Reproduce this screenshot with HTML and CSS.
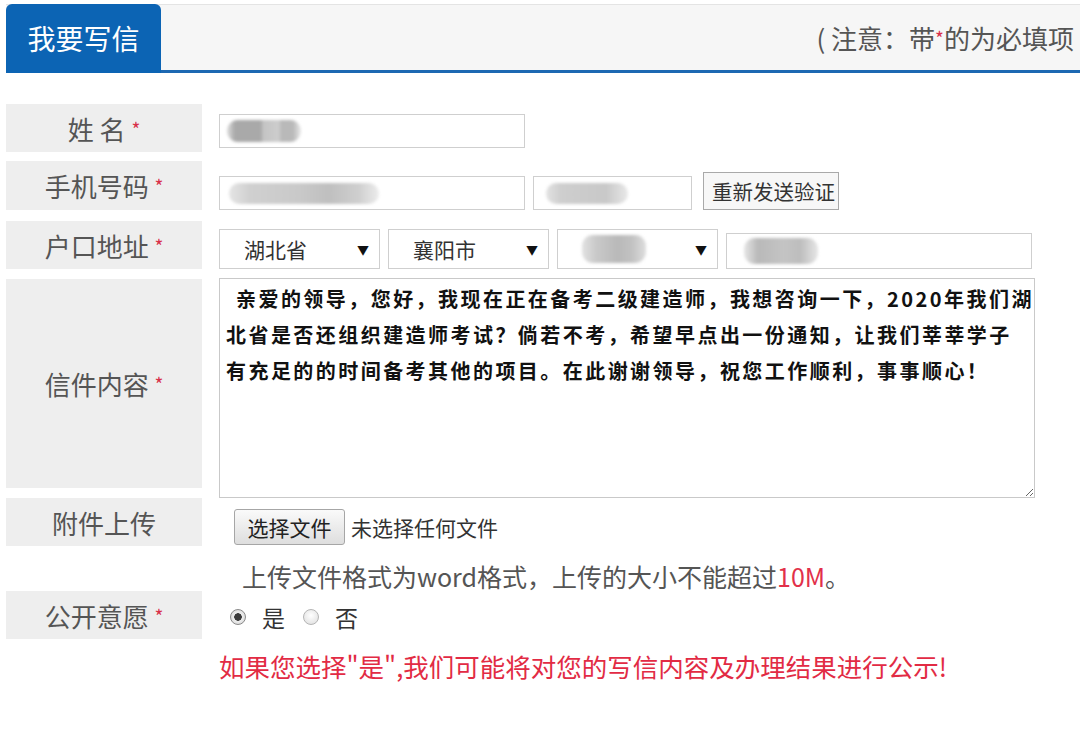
FILE: index.html
```html
<!DOCTYPE html>
<html lang="zh-CN">
<head>
    <meta charset="UTF-8">
    <meta name="viewport" content="width=device-width, initial-scale=1.0">
    <title>我要写信</title>
    <link rel="stylesheet" href="styles.css">
</head>
<body>
    <div class="tabbar">
        <div class="tab">我要写信</div>
        <div class="note">(&nbsp;注意：带<span class="req">*</span>的为必填项</div>
    </div>

    <div class="form">
        <div class="row row-name">
            <div class="label">姓 名 <span class="req">*</span></div>
            <div class="field">
                <div class="input w-name"><span class="blur blur-name"></span></div>
            </div>
        </div>

        <div class="row row-phone">
            <div class="label">手机号码 <span class="req">*</span></div>
            <div class="field">
                <div class="input w-name"><span class="blur blur-phone"></span></div>
                <div class="input w-code"><span class="blur blur-code"></span></div>
                <div class="btn-resend">重新发送验证</div>
            </div>
        </div>

        <div class="row row-addr">
            <div class="label">户口地址 <span class="req">*</span></div>
            <div class="field">
                <div class="select"><span>湖北省</span><span class="arrow">▼</span></div>
                <div class="select"><span>襄阳市</span><span class="arrow">▼</span></div>
                <div class="select"><span class="blur blur-county"></span><span class="arrow">▼</span></div>
                <div class="input w-street"><span class="blur blur-street"></span></div>
            </div>
        </div>

        <div class="row row-content">
            <div class="label label-tall">信件内容 <span class="req">*</span></div>
            <div class="field">
                <textarea class="letter" wrap="off">亲爱的领导，您好，我现在正在备考二级建造师，我想咨询一下，2020年我们湖
北省是否还组织建造师考试？倘若不考，希望早点出一份通知，让我们莘莘学子
有充足的的时间备考其他的项目。在此谢谢领导，祝您工作顺利，事事顺心！</textarea>
            </div>
        </div>

        <div class="row row-file">
            <div class="label">附件上传</div>
            <div class="field">
                <div class="btn-file">选择文件</div>
                <span class="file-none">未选择任何文件</span>
            </div>
        </div>

        <p class="hint">上传文件格式为word格式，上传的大小不能超过<span class="red">10M</span>。</p>

        <div class="row row-public">
            <div class="label">公开意愿 <span class="req">*</span></div>
            <div class="field">
                <span class="radio checked"></span><span class="radio-text">是</span>
                <span class="radio"></span><span class="radio-text">否</span>
            </div>
        </div>

        <p class="warn">如果您选择"是",我们可能将对您的写信内容及办理结果进行公示!</p>
    </div>
</body>
</html>
```

FILE: styles.css
```css
body {
    margin: 0;
    padding: 0;
    background-color: #fff;
    font-family: "Noto Sans CJK SC", "Noto Sans", sans-serif;
    color: #555;
    overflow: hidden;
}

.tabbar {
    display: flex;
    align-items: stretch;
    height: 65px;
    margin: 4px 0 0 6px;
    background-color: #f6f6f6;
    border-top: 1px solid #e4e4e4;
    border-bottom: 3px solid #1d68b2;
}

.tab {
    width: 155px;
    margin-top: -1px;
    margin-bottom: -3px;
    background-color: #0c64b4;
    border-radius: 6px 6px 0 0;
    color: #fff;
    font-size: 28px;
    display: flex;
    align-items: center;
    justify-content: center;
    padding-bottom: 2px;
    box-sizing: border-box;
}

.note {
    flex: 1;
    display: flex;
    align-items: center;
    justify-content: flex-end;
    font-size: 26px;
    color: #555;
    white-space: pre;
    overflow: hidden;
    padding-right: 6px;
}

.req {
    color: #d8304a;
    font-size: 19px;
    vertical-align: 6px;
}

.note .req {
    vertical-align: 5px;
}

.form {
    padding-left: 6px;
}

.row {
    display: flex;
    align-items: stretch;
}

.label {
    width: 196px;
    height: 48px;
    flex: none;
    background-color: #eeeeee;
    font-size: 26px;
    color: #555;
    display: flex;
    align-items: center;
    justify-content: center;
    white-space: pre;
}

.label-tall {
    height: 209px;
}

.field {
    margin-left: 17px;
    display: flex;
    align-items: flex-end;
    gap: 8px;
}

.row-name { margin-top: 31px; }
.row-name .field { align-items: center; padding-top: 6px; }

.row-phone { margin-top: 9px; }
.row-phone .label { height: 49px; }
.row-phone .btn-resend { margin-left: 3px; }

.row-addr { margin-top: 11px; }

.row-content { margin-top: 10px; align-items: flex-start; }
.row-content .field { align-items: flex-start; margin-top: -1px; }

.row-file { margin-top: 0; }
.row-file .field { align-items: center; padding-top: 10px; margin-left: 32px; gap: 6px; }

.input {
    height: 34px;
    border: 1px solid #cfcfcf;
    background-color: #fff;
    box-sizing: border-box;
    display: flex;
    align-items: center;
    padding-left: 7px;
}

.w-name { width: 306px; }
.w-code { width: 159px; }
.w-street { width: 306px; height: 36px; padding-left: 17px; }

.blur {
    display: inline-block;
    height: 22px;
    border-radius: 11px;
    filter: blur(1.5px);
}

.blur-name {
    width: 74px;
    background: linear-gradient(90deg, #ddd 0, #a9a9a9 8px, #a9a9a9 34px, #c4c4c4 36px, #cdcdcd 52px, #b9b9b9 54px, #b9b9b9 66px, #e9e9e9 74px);
}

.blur-phone {
    width: 150px;
    height: 21px;
    margin-left: 2px;
    background: linear-gradient(90deg, #e4e4e4 0, #d0d0d0 20px, #c9c9c9 70px, #bfbfbf 100px, #cfcfcf 130px, #ececec 150px);
}

.blur-code {
    width: 82px;
    height: 21px;
    margin-left: 5px;
    background: linear-gradient(90deg, #e2e2e2 0, #cecece 15px, #c8c8c8 60px, #e8e8e8 82px);
}

.blur-county {
    width: 64px;
    height: 28px;
    background: linear-gradient(90deg, #e2e2e2 0, #c9c9c9 14px, #b9b9b9 36px, #c2c2c2 50px, #dedede 64px);
}

.blur-street {
    width: 74px;
    height: 26px;
    background: linear-gradient(90deg, #e6e6e6 0, #b9b9b9 14px, #c4c4c4 40px, #bdbdbd 56px, #e6e6e6 74px);
}

.btn-resend {
    width: 136px;
    height: 38px;
    box-sizing: border-box;
    border: 1px solid #a9a9a9;
    background-color: #f7f7f7;
    color: #333;
    font-size: 20.5px;
    line-height: 36px;
    padding-left: 8px;
    white-space: nowrap;
}

.select {
    width: 161px;
    height: 40px;
    box-sizing: border-box;
    border: 1px solid #cfcfcf;
    background-color: #fff;
    display: flex;
    align-items: center;
    justify-content: space-between;
    padding: 0 10px 0 24px;
    font-size: 21px;
    color: #333;
}

.arrow {
    font-size: 12px;
    color: #111;
}

.letter {
    width: 816px;
    height: 220px;
    box-sizing: border-box;
    margin: 0;
    border: 1px solid #c9c9c9;
    padding: 2px 0 0 6px;
    font-family: "Noto Sans CJK SC", sans-serif;
    font-size: 20px;
    font-weight: 700;
    letter-spacing: 2.45px;
    line-height: 36px;
    text-indent: 10px;
    color: #111;
    overflow: hidden;
    resize: both;
    outline: none;
}

.btn-file {
    width: 111px;
    height: 36px;
    box-sizing: border-box;
    border: 1px solid #a6a6a6;
    border-radius: 3px;
    background: linear-gradient(#fafafa, #dedede);
    color: #222;
    font-size: 21px;
    display: flex;
    align-items: center;
    justify-content: center;
}

.file-none {
    font-size: 21px;
    color: #333;
}

.hint {
    margin: 0;
    padding: 15px 0 0 236px;
    height: 30px;
    font-size: 25px;
    line-height: 30px;
    color: #555;
}

.red {
    color: #e2304a;
}

.row-public { margin-top: 0; }
.row-public .field { align-items: center; padding-top: 4px; margin-left: 28px; gap: 0; }

.radio {
    width: 16px;
    height: 16px;
    border-radius: 50%;
    box-sizing: border-box;
    border: 1px solid #b5b5b5;
    background: radial-gradient(circle at 50% 40%, #fff 0, #dcdcdc 100%);
    margin-right: 16px;
}

.radio.checked {
    background: radial-gradient(circle, #3a3a3a 0, #3a3a3a 3.5px, #eeeeee 4px, #d0d0d0 100%);
    border-color: #8a8a8a;
}

.radio-text {
    font-size: 23px;
    color: #333;
    margin-right: 18px;
}

.warn {
    margin: 8px 0 0 213px;
    font-size: 25.5px;
    color: #e22b44;
}
```
